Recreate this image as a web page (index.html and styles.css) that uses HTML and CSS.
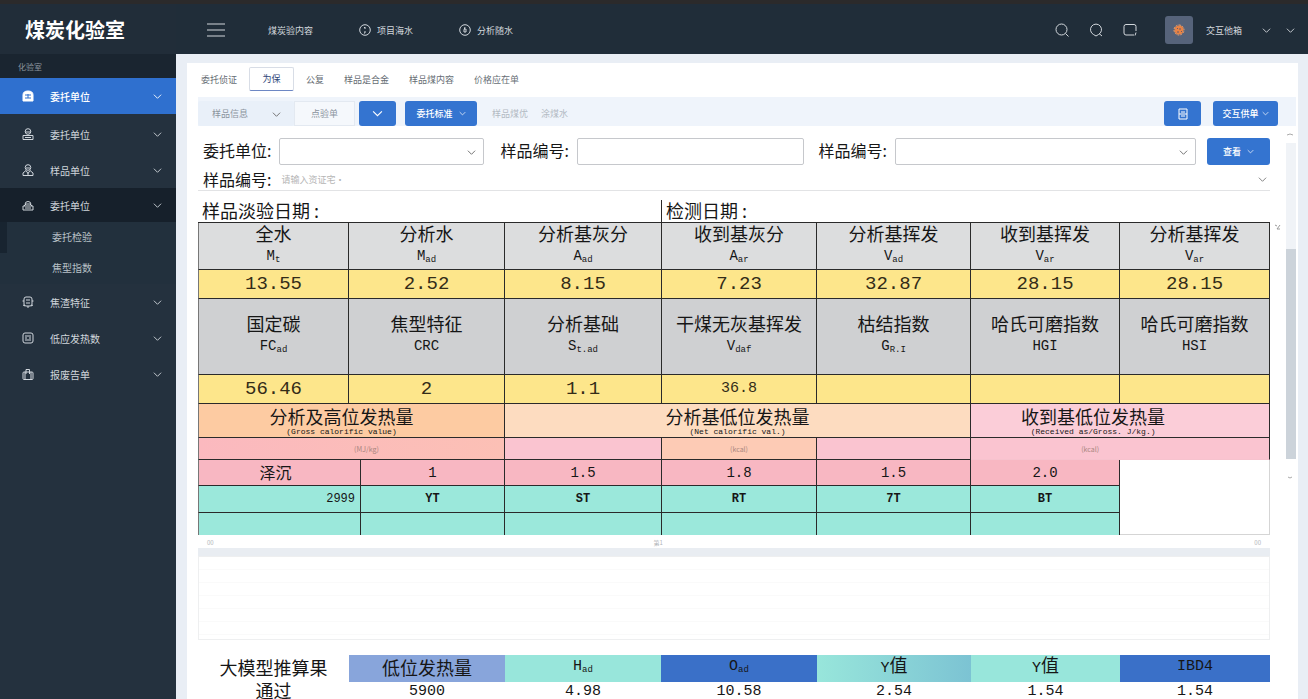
FILE: index.html
```html
<!DOCTYPE html>
<html lang="zh-CN">
<head>
    <meta charset="UTF-8">
    <meta name="viewport" content="width=device-width, initial-scale=1.0">
    <title>煤炭化验室</title>
    <link rel="stylesheet" href="styles.css">
</head>
<body>
    <!-- Shared icons -->
    <svg class="hidden">
        <symbol id="chevron" viewBox="0 0 10 10"><path d="M1 3l4 4 4-4"/></symbol>
        <symbol id="home" viewBox="0 0 12 12"><path fill="currentColor" d="M1 5Q1 1 6 1t5 4v6H1z"/><path stroke="#2f70cf" d="M3 5h6M3 8h6M6 4v4"/></symbol>
        <symbol id="person" viewBox="0 0 12 12"><circle cx="6" cy="3.5" r="2.8"/><path d="M3 4h6M1 7.5h10v4H1zM3 9.5h6"/></symbol>
        <symbol id="user" viewBox="0 0 12 12"><circle cx="6" cy="3.5" r="2.8"/><path d="M1 11.5V9l3-2.5 2 3 2-3L11 9v2.500zM4 4h4M6 9v2"/></symbol>
        <symbol id="tray" viewBox="0 0 12 12"><path d="M3 5.500a3 3 0 0 1 6 0M1 7h10v4H1zM2 7l2-2h4l2 2M3 9h6"/></symbol>
        <symbol id="gear" viewBox="0 0 12 12"><rect x="2" y="1" width="8" height="9" rx="2"/><path d="M4 4h4M4 7h4M.5 5H2M10 5h1.500M1 9l2 1M11 9l-2 1M6 10v2"/></symbol>
        <symbol id="board" viewBox="0 0 12 12"><rect x="1" y="1" width="10" height="10" rx="2"/><path d="M3 4h6M3 6h2M7 6h2M3 8h6"/></symbol>
        <symbol id="bag" viewBox="0 0 12 12"><rect x="1" y="4" width="10" height="7.500" rx="1"/><path d="M4 6V1.500h3.500V6M3 4v7M9 4v7"/></symbol>
    </svg>

    <div class="app">
        <aside class="sidebar">
            <h1 class="brand">煤炭化验室</h1>
            <p class="menu-label">化验室</p>
            <nav class="menu">
                <a href="#" class="item active"><svg class="icon"><use href="#home"/></svg><span>委托单位</span><svg class="arrow"><use href="#chevron"/></svg></a>
                <a href="#" class="item"><svg class="icon"><use href="#person"/></svg><span>委托单位</span><svg class="arrow"><use href="#chevron"/></svg></a>
                <a href="#" class="item"><svg class="icon"><use href="#user"/></svg><span>样品单位</span><svg class="arrow"><use href="#chevron"/></svg></a>
                <a href="#" class="item open"><svg class="icon"><use href="#tray"/></svg><span>委托单位</span><svg class="arrow"><use href="#chevron"/></svg></a>
                <a href="#" class="sub current">委托检验</a>
                <a href="#" class="sub">焦型指数</a>
                <a href="#" class="item"><svg class="icon"><use href="#gear"/></svg><span>焦渣特征</span><svg class="arrow"><use href="#chevron"/></svg></a>
                <a href="#" class="item"><svg class="icon"><use href="#board"/></svg><span>低应发热数</span><svg class="arrow"><use href="#chevron"/></svg></a>
                <a href="#" class="item"><svg class="icon"><use href="#bag"/></svg><span>报废告单</span><svg class="arrow"><use href="#chevron"/></svg></a>
            </nav>
        </aside>

        <div class="page">
            <header class="topbar">
                <button class="plain" aria-label="菜单"><svg class="burger" viewBox="0 0 18 14"><path d="M0 1h18M0 7h18M0 13h18"/></svg></button>
                <nav class="topnav">
                    <a href="#">煤炭验内容</a>
                    <a href="#"><svg viewBox="0 0 12 12"><circle cx="6" cy="6" r="5.300"/><path d="M5 4l1-1v2M6 7v2H5"/></svg>项目海水</a>
                    <a href="#"><svg viewBox="0 0 12 12"><circle cx="6" cy="6" r="5.300"/><path d="M6 3L5 6v2h2V5H5"/></svg>分析随水</a>
                </nav>
                <div class="tools">
                    <button class="plain" aria-label="搜索"><svg viewBox="0 0 14 14"><circle cx="6.500" cy="6.500" r="5.500"/><path d="M10.500 10.500l3 3"/></svg></button>
                    <button class="plain" aria-label="消息"><svg viewBox="0 0 14 14"><path d="M4.500 11.500a5.500 5.500 0 1 1 5 0L7 13zM10 10.500l3 2.500"/></svg></button>
                    <button class="plain" aria-label="窗口"><svg viewBox="0 0 14 14"><path d="M13 8V3.500a2 2 0 0 0-2-2H3a2 2 0 0 0-2 2V10a2 2 0 0 0 2 2h8M13 9.500l-1 3"/></svg></button>
                </div>
                <div class="account">
                    <span class="avatar"><svg viewBox="0 0 12 12"><circle cx="6" cy="6" r="4" fill="#e98345" stroke="#e98345"/><path stroke="#f0a06a" stroke-dasharray="2 1" d="M6 1a5 5 0 1 1 0 10A5 5 0 1 1 6 1"/><path stroke="#6a5b68" d="M4 4l1 1M7 4v2M4 8h2M8 7l1 1"/></svg></span>
                    <span class="name">交互他箱</span>
                    <svg class="arrow"><use href="#chevron"/></svg>
                    <svg class="arrow"><use href="#chevron"/></svg>
                </div>
            </header>

            <main class="panel">
                <nav class="tabs">
                    <a href="#">委托侦证</a>
                    <a href="#" class="on">为保</a>
                    <a href="#">公复</a>
                    <a href="#">样品是合金</a>
                    <a href="#">样品煤内容</a>
                    <a href="#">价格应在单</a>
                </nav>

                <div class="toolbar">
                    <div class="select type">
                        <select aria-label="样品信息"><option>样品信息</option></select>
                        <svg class="arrow"><use href="#chevron"/></svg>
                    </div>
                    <button class="cell">点验单</button>
                    <button class="btn small" aria-label="展开"><svg class="arrow"><use href="#chevron"/></svg></button>
                    <button class="btn wide">委托标准<svg class="arrow"><use href="#chevron"/></svg></button>
                    <a href="#" class="hint">样品煤优</a>
                    <a href="#" class="hint">涂煤水</a>
                    <button class="btn small push" aria-label="保存"><svg class="save" viewBox="0 0 10 12"><path d="M1 1h8v10H1zM3 4h4M1 6h8M3 8h4"/></svg></button>
                    <button class="btn more">交互供单<svg class="arrow"><use href="#chevron"/></svg></button>
                </div>

                <div class="body">
                    <div class="content">
                        <form>
                            <div class="row">
                                <label for="client">委托单位:</label>
                                <div class="select client">
                                    <select id="client"><option></option></select>
                                    <svg class="arrow"><use href="#chevron"/></svg>
                                </div>
                                <label for="sample">样品编号:</label>
                                <input type="text" id="sample">
                                <label for="sampleNo">样品编号:</label>
                                <div class="select number">
                                    <select id="sampleNo"><option></option></select>
                                    <svg class="arrow"><use href="#chevron"/></svg>
                                </div>
                                <button type="button" class="btn query">查看<svg class="arrow"><use href="#chevron"/></svg></button>
                            </div>
                            <div class="row line">
                                <label for="keyword">样品编号:</label>
                                <input type="text" id="keyword" placeholder="请输入资证宅·">
                                <svg class="arrow"><use href="#chevron"/></svg>
                            </div>
                        </form>

                        <table class="report">
                            <colgroup>
                                <col class="w151"><col class="w12"><col class="w144"><col class="w157"><col class="w155"><col class="w154"><col class="w149"><col class="w150">
                            </colgroup>
                            <tr class="dates">
                                <td colspan="4">样品淡验日期 :</td>
                                <td colspan="4">检测日期 :</td>
                            </tr>
                            <tr class="head">
                                <th>全水<small>M<sub>t</sub></small></th>
                                <th colspan="2">分析水<small>M<sub>ad</sub></small></th>
                                <th>分析基灰分<small>A<sub>ad</sub></small></th>
                                <th>收到基灰分<small>A<sub>ar</sub></small></th>
                                <th>分析基挥发<small>V<sub>ad</sub></small></th>
                                <th>收到基挥发<small>V<sub>ar</sub></small></th>
                                <th>分析基挥发<small>V<sub>ar</sub></small></th>
                            </tr>
                            <tr class="value">
                                <td>13.55</td>
                                <td colspan="2">2.52</td>
                                <td>8.15</td>
                                <td>7.23</td>
                                <td>32.87</td>
                                <td>28.15</td>
                                <td>28.15</td>
                            </tr>
                            <tr class="head tall">
                                <th>国定碳<small>FC<sub>ad</sub></small></th>
                                <th colspan="2">焦型特征<small>CRC</small></th>
                                <th>分析基础<small>S<sub>t.ad</sub></small></th>
                                <th>干煤无灰基挥发<small>V<sub>daf</sub></small></th>
                                <th>枯结指数<small>G<sub>R.I</sub></small></th>
                                <th>哈氏可磨指数<small>HGI</small></th>
                                <th>哈氏可磨指数<small>HSI</small></th>
                            </tr>
                            <tr class="value">
                                <td>56.46</td>
                                <td colspan="2">2</td>
                                <td>1.1</td>
                                <td class="less">36.8</td>
                                <td></td>
                                <td></td>
                                <td></td>
                            </tr>
                            <tr class="heat">
                                <th colspan="3" class="gross">分析及高位发热量<small>(Gross calorific value)</small></th>
                                <th colspan="3" class="net">分析基低位发热量<small>(Net calorific val.)</small></th>
                                <th colspan="2" class="received">收到基低位发热量<small>(Received as/Gross. J/kg.)</small></th>
                            </tr>
                            <tr class="unit">
                                <td colspan="3" class="blend">(MJ/kg)</td>
                                <td></td>
                                <td class="peach">(kcal)</td>
                                <td></td>
                                <td colspan="2" class="open-end">(kcal)</td>
                            </tr>
                            <tr class="float">
                                <th colspan="2">泽沉</th>
                                <td>1</td>
                                <td>1.5</td>
                                <td>1.8</td>
                                <td>1.5</td>
                                <td>2.0</td>
                                <td class="blank" rowspan="3"></td>
                            </tr>
                            <tr class="melt">
                                <td colspan="2" class="right">2999</td>
                                <td>YT</td>
                                <td>ST</td>
                                <td>RT</td>
                                <td>7T</td>
                                <td>BT</td>
                            </tr>
                            <tr class="melt last">
                                <td colspan="2"></td>
                                <td></td>
                                <td></td>
                                <td></td>
                                <td></td>
                                <td></td>
                            </tr>
                        </table>

                        <div class="marks"><span>00</span><span>第1</span><span>00</span></div>
                        <div class="band"></div>
                        <div class="empty"></div>

                        <table class="result">
                            <colgroup>
                                <col class="w151"><col class="w156"><col class="w156"><col class="w156"><col class="w154"><col class="w149"><col class="w150">
                            </colgroup>
                            <tr>
                                <th>大模型推算果</th>
                                <th class="violet">低位发热量</th>
                                <th class="teal mono">H<sub>ad</sub></th>
                                <th class="blue mono">O<sub>ad</sub></th>
                                <th class="teal fade"><span class="mono">Y</span>值</th>
                                <th class="teal"><span class="mono">Y</span>值</th>
                                <th class="blue mono">IBD4</th>
                            </tr>
                            <tr class="pass">
                                <th>通过</th>
                                <td>5900</td>
                                <td>4.98</td>
                                <td>10.58</td>
                                <td>2.54</td>
                                <td>1.54</td>
                                <td>1.54</td>
                            </tr>
                        </table>
                    </div>
                    <div class="corner"><svg viewBox="0 0 6 6"><path d="M0 1l2 1M5 1L2 5h3"/></svg></div>
                    <div class="rail">
                        <svg class="up" viewBox="0 0 8 4"><path d="M1 3l3-1 3 1"/></svg>
                        <div class="track"><div class="thumb"></div><svg class="down" viewBox="0 0 8 4"><path d="M2 1l2 1 2-1"/></svg></div>
                    </div>
                </div>
            </main>
        </div>
    </div>
</body>
</html>
```
FILE: styles.css
```css
* { box-sizing: border-box; }
body { margin: 0; font-family: "Noto Sans CJK SC", sans-serif; font-size: 9px; color: #161616; background: #e9eef5; }
a { color: inherit; text-decoration: none; }
button, input, select { font: inherit; color: inherit; }
svg { display: block; fill: none; stroke: currentColor; stroke-width: 1; }
.hidden { display: none; }
.arrow { width: 9px; height: 9px; flex: none; }
.mono { font-family: "Liberation Mono", monospace; }

.app { display: flex; height: 100vh; overflow: hidden; border-top: 4px solid #2b2a2b; }

/* Sidebar */
.sidebar { width: 176px; flex: none; background: #24313e; color: #d0d6dc; }
.brand { margin: 0; height: 50px; line-height: 52px; padding-left: 25px; font-size: 20px; font-weight: 700; color: #fff; background: #212d39; }
.menu-label { margin: 0; height: 24px; line-height: 26px; padding-left: 18px; font-size: 8px; color: #8b959e; background: #1a2530; }
.item { display: flex; align-items: center; height: 36px; padding: 0 14px 0 22px; font-size: 10px; }
.item .icon { width: 12px; height: 12px; margin-right: 16px; }
.item .arrow { margin-left: auto; }
.active { background: #2f70cf; color: #fff; margin-bottom: 2px; font-weight: 500; }
.open { height: 34px; background: #16202b; }
.sub { display: block; height: 31px; line-height: 30px; padding-left: 52px; font-size: 10px; color: #b9c1c8; background: #22303d; }
.current { border-left: 7px solid #182430; padding-left: 45px; }

/* Top bar */
.page { flex: 1; min-width: 0; display: flex; flex-direction: column; }
.topbar { display: flex; align-items: center; height: 50px; flex: none; padding: 2px 13px 0 31px; background: #202d39; color: #d2d7dc; }
.plain { padding: 0; border: 0; background: none; cursor: pointer; }
.burger { width: 18px; height: 14px; }
.topnav { display: flex; gap: 46px; margin-left: 43px; font-size: 9px; }
.topnav a { display: flex; align-items: center; gap: 6px; }
.topnav svg { width: 12px; height: 12px; }
.tools { display: flex; gap: 20px; margin-left: auto; }
.tools svg { width: 14px; height: 14px; }
.account { display: flex; align-items: center; margin-left: 28px; }
.avatar { width: 28px; height: 28px; padding: 8px; border-radius: 3px; background: #56637a; }
.name { margin: 0 20px 0 13px; }
.account .arrow + .arrow { margin-left: 15px; }

/* Panel */
.panel { flex: 1; min-height: 0; margin: 9px 10px 0 11px; padding: 0 2px 0 11px; background: #fff; }
.tabs { display: flex; align-items: center; gap: 20px; height: 34px; padding: 0 3px 2px; color: #666d74; }
.tabs .on { height: 24px; line-height: 22px; margin: 0 -8px; width: 45px; text-align: center; border: 1px solid #d8dde6; border-bottom-color: #6d87c4; border-radius: 2px; color: #2f4778; }
.toolbar { display: flex; align-items: stretch; height: 29px; padding: 4px 18px 0 0; background: #eff4fb; color: #8b949e; }
.btn { display: flex; align-items: center; justify-content: center; gap: 6px; padding: 0; border: 0; border-radius: 3px; background: #3474d0; color: #fff; cursor: pointer; }
.btn .arrow { width: 7px; height: 7px; }
.small { width: 37px; margin: 0 9px 0 4px; }
.small .arrow { width: 11px; height: 11px; }
.wide { width: 72px; margin-right: 15px; font-weight: 500; }
.more { width: 65px; margin-left: 3px; gap: 3px; font-weight: 500; }
.push { margin-left: auto; }
.save { width: 10px; height: 12px; }
.cell { width: 61px; padding: 0; border: 1px solid #e3e9f1; background: #f5f8fc; }
.hint { line-height: 25px; margin-right: 13px; color: #b3bac3; }
.select { position: relative; }
.select select { width: 100%; height: 100%; appearance: none; border: 1px solid #c6c8cc; border-radius: 2px; background: #fff; }
.select .arrow { position: absolute; right: 8px; top: 50%; margin-top: -4px; color: #666; pointer-events: none; }
.type { width: 96px; }
.type select { border: 0; padding-left: 14px; background: #e9f0f9; }
.type .arrow { right: 13px; }

/* Form */
.body { display: flex; }
.content { flex: 1; min-width: 0; }
.row { display: flex; align-items: center; height: 39px; padding: 12px 0 0 5px; }
.row label { margin-right: 8px; padding-bottom: 4px; font-size: 16px; line-height: 20px; }
.row input { min-width: 0; height: 27px; padding: 0; border: 1px solid #c6c8cc; border-radius: 2px; flex: 227 0 0; margin-right: 15px; }
.row .select { height: 27px; flex: 207 0 0; margin-right: 16px; }
.row .number { flex-grow: 304; margin-right: 11px; }
.query { width: 63px; height: 27px; font-weight: 500; }
.line { height: 26px; padding-top: 4px; padding-right: 3px; border-bottom: 1px solid #e2e3e5; }
.line label { padding-bottom: 2px; }
.line input { height: 20px; padding: 0 2px; border: 0; background: none; }
.line input::placeholder { color: #b5b5b5; }
.line .arrow { color: #777; }

/* Coal report */
table { width: 100%; table-layout: fixed; border-spacing: 0; }
th, td { padding: 0; text-align: center; font-weight: 400; }
.w12 { width: 12px; }
.w144 { width: 144px; }
.w149 { width: 149px; }
.w150 { width: 150px; }
.w151 { width: 151px; }
.w154 { width: 154px; }
.w155 { width: 155px; }
.w156 { width: 156px; }
.w157 { width: 157px; }
.report { margin-top: 9px; font-size: 18px; line-height: 22px; }
.report th, .report td { border-right: 1px solid #2a2a2a; border-bottom: 1px solid #2a2a2a; }
.report tr:not(.dates) > :first-child { border-left: 1px solid #777; }
.report small { display: block; font: 14px/26px "Liberation Mono", monospace; }
sub { font-size: 9px; line-height: 1px; vertical-align: -2px; }
.report .dates td { height: 23px; padding: 0 0 2px 4px; line-height: 20px; text-align: left; }
.report .dates td:last-child { border-right: 0; }
.head th { height: 47px; line-height: 20px; background: #dcddde; }
.tall th { height: 76px; padding-bottom: 2px; background: #cfd0d2; }
.value td { height: 29px; font: 19px/22px "Liberation Mono", monospace; background: #fde68b; color: #332c18; }
.value .less { font-size: 15px; }
.heat th { height: 34px; line-height: 24px; vertical-align: top; }
.report .heat small { font-size: 8px; line-height: 8px; }
.heat .gross { padding-right: 20px; background: #fdcba2; }
.heat .net { background: #fddcc0; }
.heat .received { padding-right: 54px; background: #fbcdd8; }
.unit td { height: 22px; font-size: 7px; line-height: 10px; color: #a98680; background: #fac4d0; }
.unit .blend { padding-left: 30px; background: linear-gradient(90deg, #fbb9bf, #fcc0b5); }
.unit .peach { background: #fdcbb5; }
.report .unit .open-end { padding-right: 60px; border-bottom-color: #f6c3ce; }
.float th, .float td { height: 26px; background: #f8b7c2; }
.float th { padding: 0 8px 2px 0; font-size: 16px; }
.float td { font: 14px/22px "Liberation Mono", monospace; }
.melt td { height: 27px; font: bold 12px/20px "Liberation Mono", monospace; background: #9be8db; }
.melt .right { padding-right: 5px; text-align: right; font-weight: 400; }
.report .last td { height: 22px; border-bottom: 0; }
.report .float .blank { background: #fff; border-color: #d5d5d5; }

.marks { display: grid; grid-template-columns: 446fr 600fr auto; height: 13px; padding: 0 9px; font-size: 6px; line-height: 15px; color: #b0b4b8; }
.band { height: 8px; background: #e9edf2; }
.empty { height: 84px; border: 1px solid #eeeff0; background: repeating-linear-gradient(#fff 0 12px, #fafafa 12px 13px); }

.result { margin-top: 15px; font-size: 18px; }
.result th { height: 27px; padding-bottom: 4px; line-height: 18px; }
.result td { height: 20px; font: 15px/18px "Liberation Mono", monospace; }
.result .pass th { height: 20px; line-height: 16px; }
.result .mono { font-family: "Liberation Mono", monospace; font-size: 15px; }
.violet { background: #88a5db; }
.teal { background: #98e6db; }
.fade { background: linear-gradient(90deg, #98e6db, #7cc3d3); }
.blue { background: #3a70c8; }

/* Scroll rail */
.corner { width: 16px; padding: 98px 0 0 5px; color: #999; }
.corner svg { width: 6px; height: 6px; }
.rail { width: 10px; color: #aaa; }
.up { width: 8px; height: 4px; margin: 6px 0 7px; }
.track { height: 316px; padding-top: 106px; background: #f0f3f7; }
.thumb { height: 210px; background: #ccd3da; }
.down { width: 8px; height: 4px; margin-top: 17px; }
```
